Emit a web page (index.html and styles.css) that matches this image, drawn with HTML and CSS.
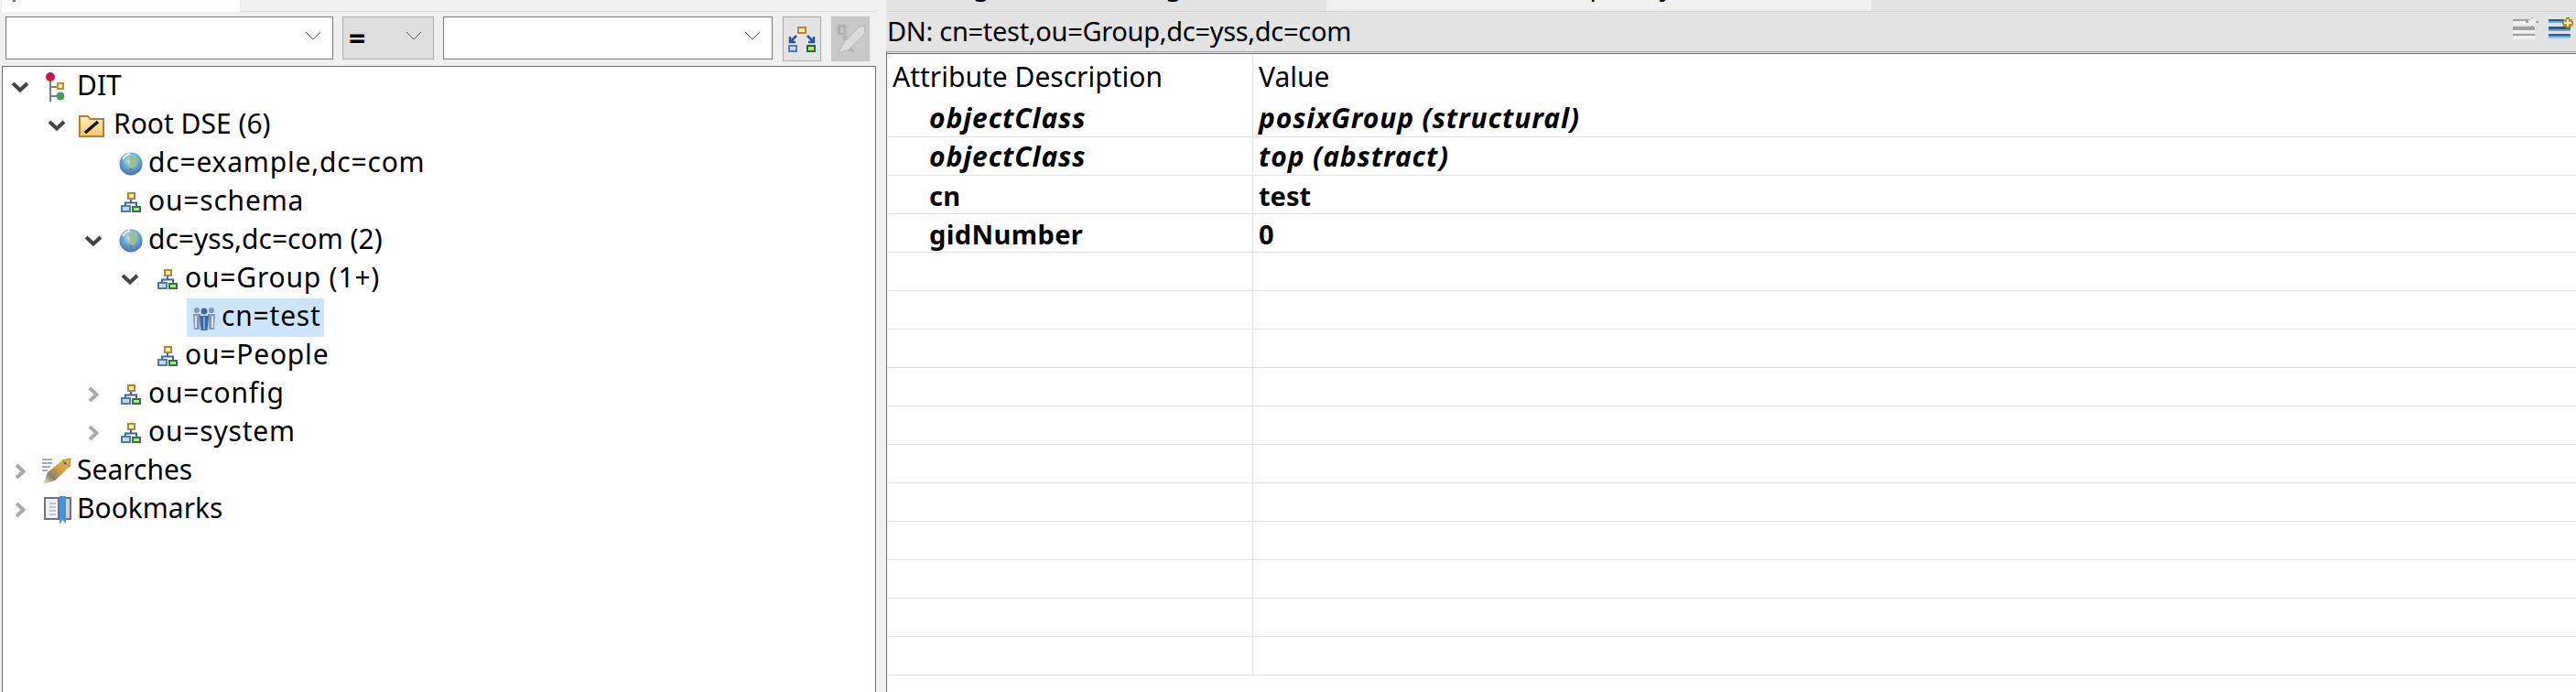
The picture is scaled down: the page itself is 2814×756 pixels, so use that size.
FILE: index.html
```html
<!DOCTYPE html>
<html lang="en">
<head>
  <meta charset="UTF-8">
  <title>LDAP Browser</title>
  <link rel="stylesheet" href="styles.css">
</head>
<body>
  <svg class="defs" width="0" height="0">
    <defs>
      <radialGradient id="globe-fill" cx="0.5" cy="0.35" r="0.7">
        <stop offset="0" stop-color="#e4f2e0"/>
        <stop offset="0.5" stop-color="#62aad2"/>
        <stop offset="1" stop-color="#4f62a0"/>
      </radialGradient>
      <linearGradient id="folder-fill" x1="0" y1="0" x2="0" y2="1">
        <stop offset="0" stop-color="#fff0c0"/>
        <stop offset="1" stop-color="#fbc860"/>
      </linearGradient>
      <linearGradient id="pen-fill" x1="0" y1="1" x2="1" y2="0">
        <stop offset="0" stop-color="#fff6b0"/>
        <stop offset="0.3" stop-color="#8a8078"/>
        <stop offset="0.6" stop-color="#d8a040"/>
        <stop offset="1" stop-color="#f0c060"/>
      </linearGradient>

      <symbol id="i-dit" viewBox="0 0 22 32">
        <path d="M5 6V32M5 16H14M5 26H14" fill="none" stroke="#76808c" stroke-width="2"/>
        <circle cx="5" cy="5" r="5" fill="#c8174a"/>
        <rect x="13" y="12" width="6" height="6" fill="#fff2b8" stroke="#b8902c" stroke-width="2"/>
        <circle cx="16" cy="26" r="4.5" fill="#4c9a5c"/>
      </symbol>

      <symbol id="i-folder" viewBox="0 0 28 25">
        <path d="M1 24V2H10L13 5H27V24Z" fill="url(#folder-fill)" stroke="#b87c34" stroke-width="2"/>
        <path d="M7 20L21 8" stroke="#111" stroke-width="3.5"/>
      </symbol>

      <symbol id="i-globe" viewBox="0 0 26 26">
        <circle cx="13" cy="13" r="12.5" fill="url(#globe-fill)"/>
        <path d="M10 5L17 4L20 10L17 16L13 19L12 12Z" fill="#9cc08c"/>
        <circle cx="13" cy="19" r="1" fill="#c03030"/>
        <path d="M4 8Q7 3 12 2" fill="none" stroke="#e8f4fa" stroke-width="2"/>
      </symbol>

      <symbol id="i-ou" viewBox="0 0 22 22">
        <path d="M11 8V12M5 15V11.500H17V15" fill="none" stroke="#3a64a0" stroke-width="2"/>
        <rect x="8" y="1" width="7" height="6" fill="#fff0b0" stroke="#b8862c" stroke-width="2"/>
        <rect x="1" y="15" width="9" height="6" fill="#c8d8ec" stroke="#5279ac" stroke-width="2"/>
        <rect x="13" y="16" width="8" height="5" fill="#d8d860" stroke="#1e7c40" stroke-width="2"/>
      </symbol>

      <symbol id="i-group" viewBox="0 0 26 27">
        <g fill="#7f97b8">
          <circle cx="5" cy="5" r="3"/>
          <path d="M1 9H9L8 26H2Z"/>
          <circle cx="21" cy="5" r="3"/>
          <path d="M17 9H25L24 26H18Z"/>
        </g>
        <path d="M4 11V24M22 11V24" stroke="#dde6f2" stroke-width="2"/>
        <g fill="#3a68a8">
          <circle cx="13" cy="6" r="3.500"/>
          <path d="M8 11H18L16.500 27H9.500Z"/>
        </g>
        <path d="M13 12V26" stroke="#cfe0f4" stroke-width="1"/>
      </symbol>

      <symbol id="i-search" viewBox="0 0 32 28">
        <path d="M0 1H11M0 5H11M0 9H9M0 13H6" stroke="#9ab0cc" stroke-width="2"/>
        <path d="M1 28L6 15L22 2L31 0L30 9L14 24Z" fill="url(#pen-fill)"/>
        <path d="M22 2L31 0L30 9Z" fill="#e8b040" stroke="#a87c28" stroke-width="1"/>
        <circle cx="25" cy="5" r="1.500" fill="#3a68a8"/>
      </symbol>

      <symbol id="i-book" viewBox="0 0 30 30">
        <path d="M1 2H16V25H1Z" fill="#eef0f2" stroke="#6c7480" stroke-width="2"/>
        <path d="M16 2H29V25H16Z" fill="#d0d4c8" stroke="#6c7480" stroke-width="2"/>
        <path d="M6 8H13M6 12H13M6 16H13M6 20H13" stroke="#b0b8c4" stroke-width="1.500"/>
        <path d="M17 0H24V30L20.500 26L17 30Z" fill="#3c94e8"/>
      </symbol>

      <symbol id="i-tree-view" viewBox="0 0 30 28">
        <rect x="11" y="1" width="8" height="6" fill="#fff0b0" stroke="#b8862c" stroke-width="2"/>
        <path d="M2 17L9 10M2 11V17H8M28 17L21 10M28 11V17H22" fill="none" stroke="#2c52a0" stroke-width="2.500"/>
        <rect x="1" y="21" width="8" height="6" fill="#c8d8ec" stroke="#5279ac" stroke-width="2"/>
        <rect x="21" y="21" width="8" height="6" fill="#d8d860" stroke="#14703a" stroke-width="2"/>
      </symbol>

      <symbol id="i-pen-off" viewBox="0 0 36 36">
        <path d="M3 1H13V13H3ZM6 4V10H10V4Z" fill="#b0b0b0" fill-rule="evenodd"/>
        <path d="M13 13L22 32H16L8 14Z" fill="#b4b4b4"/>
        <path d="M4 34L10 22L29 3L35 3L34 12L16 30Z" fill="#dcdcdc" stroke="#b4b4b4"/>
      </symbol>

      <symbol id="i-add-off" viewBox="0 0 28 24" shape-rendering="crispEdges">
        <rect x="0" y="2" width="20" height="2" fill="#a0a0a0"/>
        <rect x="0" y="4" width="20" height="4" fill="#f0f0f0"/>
        <rect x="0" y="10" width="24" height="4" fill="#a0a0a0"/>
        <rect x="0" y="14" width="24" height="3" fill="#f0f0f0"/>
        <rect x="0" y="18" width="24" height="2" fill="#a0a0a0"/>
        <rect x="0" y="20" width="24" height="4" fill="#f0f0f0"/>
        <path d="M20 0H22V4H28V6H22V12H20V6H14V4H20Z" fill="#a0a0a0"/>
        <rect x="17" y="3" width="8" height="4" fill="#f0f0f0"/>
        <rect x="19" y="1" width="4" height="8" fill="#f0f0f0"/>
      </symbol>

      <symbol id="i-add" viewBox="0 0 28 24" shape-rendering="crispEdges">
        <rect x="0" y="2" width="20" height="2" fill="#1a5f9e"/>
        <rect x="0" y="4" width="20" height="2" fill="#74a2d0"/>
        <rect x="0" y="6" width="20" height="2" fill="#dce8f4"/>
        <rect x="0" y="10" width="24" height="3" fill="#1a5f9e"/>
        <rect x="0" y="13" width="24" height="2" fill="#74a2d0"/>
        <rect x="0" y="15" width="24" height="2" fill="#dce8f4"/>
        <rect x="0" y="18" width="24" height="2" fill="#1a5f9e"/>
        <rect x="0" y="20" width="24" height="2" fill="#74a2d0"/>
        <rect x="0" y="22" width="24" height="2" fill="#c8daec"/>
        <rect x="19" y="0" width="4" height="12" fill="#a8801c"/>
        <rect x="15" y="4" width="12" height="4" fill="#a8801c"/>
        <rect x="16" y="2" width="10" height="8" fill="#b89024"/>
        <rect x="20" y="2" width="2" height="8" fill="#fff4c0"/>
        <rect x="17" y="5" width="8" height="2" fill="#fff4c0"/>
      </symbol>

      <symbol id="chev-down" viewBox="0 0 20 12">
        <path d="M2 2L10 9.500L18 2" fill="none" stroke="#444" stroke-width="4"/>
      </symbol>
      <symbol id="chev-right" viewBox="0 0 12 18">
        <path d="M2 2L9.500 9L2 16" fill="none" stroke="#aaa" stroke-width="4"/>
      </symbol>
      <symbol id="chev-thin" viewBox="0 0 18 10">
        <path d="M1 1L9 9L17 1" fill="none" stroke="#555" stroke-width="1"/>
      </symbol>
    </defs>
  </svg>

  <div class="workbench">
    <div class="left-pane">
      <div class="tab-strip">
        <div class="view-tab"><span class="tab-mark"></span></div>
      </div>
      <div class="toolbar">
        <div class="combo combo-attr"><svg class="combo-arrow"><use href="#chev-thin"/></svg></div>
        <div class="combo combo-op"><span class="combo-text">=</span><svg class="combo-arrow"><use href="#chev-thin"/></svg></div>
        <div class="combo combo-value"><svg class="combo-arrow"><use href="#chev-thin"/></svg></div>
        <div class="tool-btn"><svg class="tool-icon"><use href="#i-tree-view"/></svg></div>
        <div class="tool-btn disabled"><svg class="tool-icon pen"><use href="#i-pen-off"/></svg></div>
      </div>
      <div class="tree">
        <div class="tree-row">
          <svg class="twistie open"><use href="#chev-down"/></svg>
          <span class="node"><span class="slot"><svg class="icon icon-dit"><use href="#i-dit"/></svg></span><span class="label">DIT</span></span>
        </div>
        <div class="tree-row depth-1">
          <svg class="twistie open"><use href="#chev-down"/></svg>
          <span class="node"><span class="slot"><svg class="icon icon-folder"><use href="#i-folder"/></svg></span><span class="label">Root DSE (6)</span></span>
        </div>
        <div class="tree-row depth-2">
          <span class="twistie"></span>
          <span class="node"><span class="slot"><svg class="icon icon-globe"><use href="#i-globe"/></svg></span><span class="label wide">dc=example,dc=com</span></span>
        </div>
        <div class="tree-row depth-2">
          <span class="twistie"></span>
          <span class="node"><span class="slot"><svg class="icon icon-ou"><use href="#i-ou"/></svg></span><span class="label wide">ou=schema</span></span>
        </div>
        <div class="tree-row depth-2">
          <svg class="twistie open"><use href="#chev-down"/></svg>
          <span class="node"><span class="slot"><svg class="icon icon-globe"><use href="#i-globe"/></svg></span><span class="label">dc=yss,dc=com (2)</span></span>
        </div>
        <div class="tree-row depth-3">
          <svg class="twistie open"><use href="#chev-down"/></svg>
          <span class="node"><span class="slot"><svg class="icon icon-ou"><use href="#i-ou"/></svg></span><span class="label wide">ou=Group (1+)</span></span>
        </div>
        <div class="tree-row depth-4">
          <span class="twistie"></span>
          <span class="node selected"><span class="slot"><svg class="icon icon-group"><use href="#i-group"/></svg></span><span class="label wide">cn=test</span></span>
        </div>
        <div class="tree-row depth-3">
          <span class="twistie"></span>
          <span class="node"><span class="slot"><svg class="icon icon-ou"><use href="#i-ou"/></svg></span><span class="label wide">ou=People</span></span>
        </div>
        <div class="tree-row depth-2">
          <svg class="twistie closed"><use href="#chev-right"/></svg>
          <span class="node"><span class="slot"><svg class="icon icon-ou"><use href="#i-ou"/></svg></span><span class="label wide">ou=config</span></span>
        </div>
        <div class="tree-row depth-2">
          <svg class="twistie closed"><use href="#chev-right"/></svg>
          <span class="node"><span class="slot"><svg class="icon icon-ou"><use href="#i-ou"/></svg></span><span class="label wide">ou=system</span></span>
        </div>
        <div class="tree-row">
          <svg class="twistie closed"><use href="#chev-right"/></svg>
          <span class="node"><span class="slot"><svg class="icon icon-search"><use href="#i-search"/></svg></span><span class="label">Searches</span></span>
        </div>
        <div class="tree-row">
          <svg class="twistie closed"><use href="#chev-right"/></svg>
          <span class="node"><span class="slot"><svg class="icon icon-book"><use href="#i-book"/></svg></span><span class="label">Bookmarks</span></span>
        </div>
      </div>
    </div>

    <div class="right-pane">
      <div class="editor-tabs">
        <div class="editor-tab logs"><span class="cut-text first-log">Logs</span><span class="cut-text second-log">Logs</span></div>
        <div class="editor-tab current"><span class="cut-text dn-tab">cn=test,ou=Group,dc=yss,dc=com</span></div>
      </div>
      <div class="dn-bar">
        <span class="dn-text">DN: cn=test,ou=Group,dc=yss,dc=com</span>
        <div class="dn-actions">
          <svg class="dn-icon"><use href="#i-add-off"/></svg>
          <svg class="dn-icon"><use href="#i-add"/></svg>
        </div>
      </div>
      <div class="attr-table">
        <div class="attr-row head"><div class="cell key">Attribute Description</div><div class="cell">Value</div></div>
        <div class="attr-row object"><div class="cell key">objectClass</div><div class="cell">posixGroup (structural)</div></div>
        <div class="attr-row object"><div class="cell key">objectClass</div><div class="cell">top (abstract)</div></div>
        <div class="attr-row must"><div class="cell key">cn</div><div class="cell">test</div></div>
        <div class="attr-row must"><div class="cell key">gidNumber</div><div class="cell">0</div></div>
        <div class="attr-row"><div class="cell key"></div><div class="cell"></div></div>
        <div class="attr-row"><div class="cell key"></div><div class="cell"></div></div>
        <div class="attr-row"><div class="cell key"></div><div class="cell"></div></div>
        <div class="attr-row"><div class="cell key"></div><div class="cell"></div></div>
        <div class="attr-row"><div class="cell key"></div><div class="cell"></div></div>
        <div class="attr-row"><div class="cell key"></div><div class="cell"></div></div>
        <div class="attr-row"><div class="cell key"></div><div class="cell"></div></div>
        <div class="attr-row"><div class="cell key"></div><div class="cell"></div></div>
        <div class="attr-row"><div class="cell key"></div><div class="cell"></div></div>
        <div class="attr-row"><div class="cell key"></div><div class="cell"></div></div>
        <div class="attr-row"><div class="cell key"></div><div class="cell"></div></div>
      </div>
    </div>
  </div>
</body>
</html>
```

FILE: styles.css
```css
html, body {
  margin: 0;
  height: 100%;
  overflow: hidden;
}
body {
  background-color: #f0f0f0;
  color: #000;
  font-family: "Noto Sans", Arial, sans-serif;
  font-size: 30px;
}
.defs {
  display: block;
  height: 0;
}
.workbench {
  display: flex;
  height: 756px;
}

/* left pane */
.left-pane {
  width: 957px;
  padding-left: 2px;
  box-sizing: border-box;
  display: flex;
  flex-direction: column;
}
.tab-strip {
  height: 12px;
  border-bottom: 1px solid #dcdcdc;
  flex: none;
}
.view-tab {
  width: 260px;
  height: 13px;
  background-color: #fff;
  padding-left: 12px;
  box-sizing: border-box;
}
.tab-mark {
  display: block;
  width: 3px;
  height: 2px;
  background-color: #777;
}
.toolbar {
  flex: none;
  display: flex;
  align-items: flex-start;
  height: 59px;
  padding: 5px 0 0 4px;
  box-sizing: border-box;
}
.combo {
  flex: none;
  height: 47px;
  box-sizing: border-box;
  border: 1px solid #7a7a7a;
  background-color: #fff;
  display: flex;
  align-items: center;
  margin-right: 10px;
  padding: 0 12px 0 6px;
}
.combo-attr { width: 358px; }
.combo-op {
  width: 100px;
  background-color: #dfdfdf;
  border-color: #adadad;
}
.combo-value { width: 360px; margin-right: 11px; }
.combo-text {
  font-size: 32px;
  font-weight: 700;
  line-height: 1;
}
.combo-arrow {
  width: 18px;
  height: 10px;
  margin-left: auto;
  margin-top: -6px;
}
.tool-btn {
  flex: none;
  width: 42px;
  height: 49px;
  box-sizing: border-box;
  border: 1px solid #adadad;
  outline: 1px solid #ececec;
  background-color: #e3e3e3;
  display: flex;
  align-items: center;
  justify-content: center;
  margin-right: 11px;
}
.tool-btn:last-child { margin-right: 0; }
.tool-btn.disabled {
  background-color: #c8c8c8;
  border-color: #c8c8c8;
}
.tool-icon {
  width: 30px;
  height: 28px;
}
.tool-icon.pen {
  width: 34px;
  height: 34px;
}
.tree {
  flex: 1;
  background-color: #fff;
  border: 1px solid #6e6e6e;
  border-bottom: none;
  padding-top: 1px;
}

.tree-row {
  height: 42px;
  display: flex;
  align-items: center;
  padding-left: 9px;
}
.depth-1 { padding-left: 49px; }
.depth-2 { padding-left: 89px; }
.depth-3 { padding-left: 129px; }
.depth-4 { padding-left: 169px; }
.twistie {
  width: 20px;
  flex: none;
  margin-right: 12px;
}
.twistie.open { height: 12px; }
.twistie.closed { height: 18px; }
.node {
  display: flex;
  align-items: center;
  height: 42px;
  padding-right: 3px;
}
.node.selected { background-color: #cce5fb; }
.slot {
  width: 40px;
  flex: none;
  display: flex;
  align-items: center;
}
.depth-2 .slot,
.depth-3 .slot,
.depth-4 .slot {
  width: 38px;
}
.label {
  line-height: 42px;
  margin-top: -5px;
}
.label.wide { letter-spacing: 0.8px; }
.icon { display: block; flex: none; }
.icon-dit { width: 22px; height: 32px; margin-left: 6px; }
.icon-folder { width: 28px; height: 25px; margin-left: 2px; }
.icon-globe { width: 26px; height: 26px; margin-left: 6px; }
.icon-ou { width: 22px; height: 22px; margin-left: 8px; }
.icon-group { width: 26px; height: 27px; margin-left: 6px; }
.icon-search { width: 32px; height: 28px; margin-left: 2px; }
.icon-book { width: 30px; height: 30px; margin-left: 4px; }

/* right pane */
.right-pane {
  flex: 1;
  margin-left: 11px;
  min-width: 0;
  display: flex;
  flex-direction: column;
}
.editor-tabs {
  height: 12px;
  flex: none;
  display: flex;
  background-color: #e3e3e3;
  border-bottom: 1px solid #d6d6d6;
}
.editor-tab {
  overflow: hidden;
  height: 12px;
  position: relative;
}
.editor-tab.logs { width: 481px; }
.editor-tab.current {
  width: 595px;
  background-color: #f0f0f0;
}
.cut-text {
  position: absolute;
  top: -37px;
  line-height: 42px;
  white-space: nowrap;
}
.first-log { left: 61px; }
.second-log { left: 271px; }
.dn-tab { left: 52px; }
.dn-bar {
  height: 43px;
  flex: none;
  box-sizing: border-box;
  background-color: #e3e3e3;
  display: flex;
  align-items: center;
  padding: 0 2px 0 1px;
}
.dn-text {
  font-size: 29px;
  letter-spacing: -0.3px;
  padding-bottom: 3px;
}
.dn-actions {
  margin-left: auto;
  display: flex;
  gap: 11px;
  padding-bottom: 7px;
}
.dn-icon {
  display: block;
  width: 28px;
  height: 24px;
}
.attr-table {
  flex: 1;
  overflow: hidden;
  background-color: #fff;
  border-top: 1px solid #a0a0a0;
  border-left: 1px solid #6e6e6e;
  box-shadow: inset 0 1px 0 #e3e3e3, inset 0 2px 0 #6e6e6e;
  padding-top: 2px;
}
.attr-row {
  display: grid;
  grid-template-columns: 400px 1fr;
  height: 42px;
  box-sizing: border-box;
  border-bottom: 1px solid #e3e3e3;
  line-height: 41px;
}
.attr-row.head {
  height: 49px;
  border-bottom: none;
  line-height: 49px;
}
.cell {
  padding-left: 6px;
  white-space: nowrap;
}
.cell.key { border-right: 1px solid #e3e3e3; }
.attr-row.object .cell,
.attr-row.must .cell {
  font-weight: 700;
  font-size: 29px;
}
.attr-row.object .cell {
  font-size: 30px;
  font-style: italic;
  letter-spacing: 0.9px;
}
.attr-row.must { line-height: 43px; }
.attr-row.must .cell.key { letter-spacing: 0.4px; }
.attr-row.object .cell.key,
.attr-row.must .cell.key {
  padding-left: 46px;
}
```
